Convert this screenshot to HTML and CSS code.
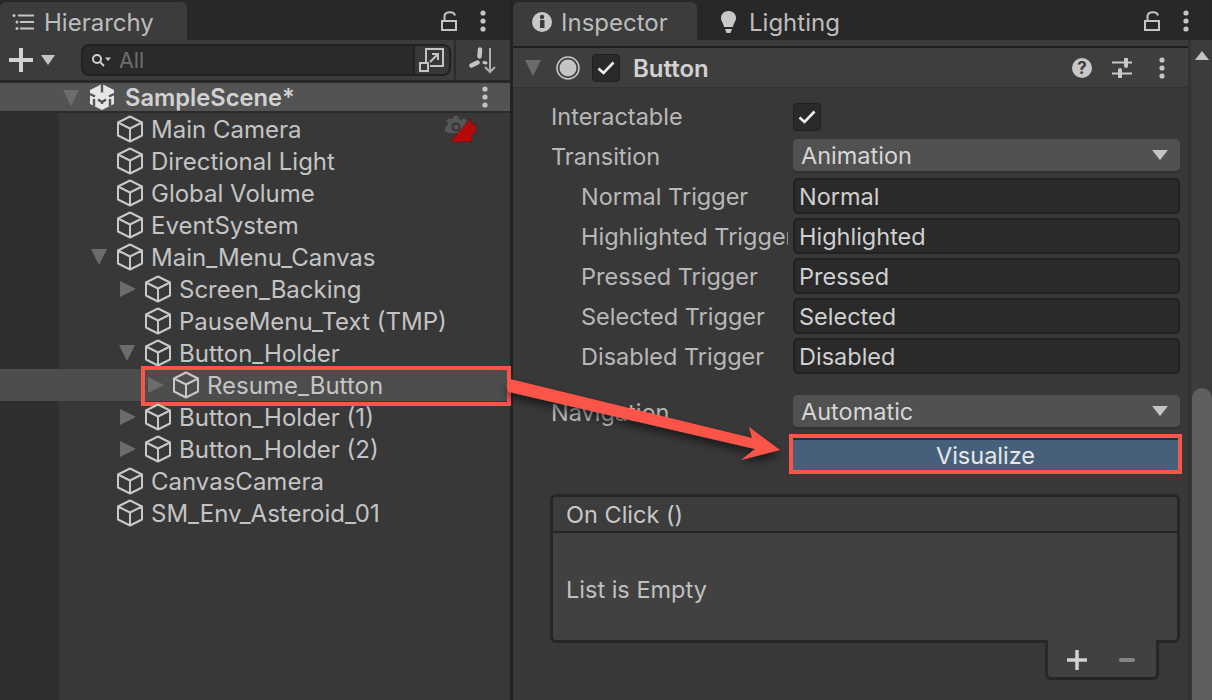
FILE: index.html
```html
<!DOCTYPE html>
<html lang="en">
<head>
<meta charset="utf-8">
<title>Unity Editor</title>
<link rel="stylesheet" href="styles.css">
</head>
<body>
<svg class="defs" width="0" height="0">
  <defs>
    <symbol id="cube" viewBox="0 0 28 28">
      <path d="M14 1.500 26 7.500V20.500L14 26.500 2 20.500V7.500ZM2 7.500 14 13.500 26 7.500M14 13.500V26.500" fill="none" stroke="#c8c8c8" stroke-width="2" stroke-linejoin="round"/>
    </symbol>
    <symbol id="kebab" viewBox="0 0 8 24">
      <circle cx="4" cy="4" r="2.600" fill="#c4c4c4"/><circle cx="4" cy="12" r="2.600" fill="#c4c4c4"/><circle cx="4" cy="20" r="2.600" fill="#c4c4c4"/>
    </symbol>
    <symbol id="lock" viewBox="0 0 16 20">
      <path d="M1 10H15V19H1ZM3.500 10V5.500C3.500 0 13 0 14 4.500" fill="none" stroke="#c4c4c4" stroke-width="2"/>
    </symbol>
    <symbol id="check" viewBox="0 0 18 14">
      <path d="M1.500 7.500 6.500 12 16.500 1.500" fill="none" stroke="#f0f0f0" stroke-width="2.600"/>
    </symbol>
  </defs>
</svg>
<main class="editor">
  <section class="panel hierarchy">
    <header class="tabbar">
      <div class="tab tab-h">
        <svg viewBox="0 0 22 18" width="22" height="18"><path d="M6 2.500H22M8 9H22M8 15.500H22" stroke="#c4c4c4" stroke-width="2"/><circle cx="2" cy="2.500" r="1.500" fill="#c4c4c4"/><circle cx="5" cy="9" r="1.500" fill="#c4c4c4"/><circle cx="5" cy="15.500" r="1.500" fill="#c4c4c4"/></svg>
        <span>Hierarchy</span>
      </div>
      <div class="tab-actions">
        <svg width="16" height="20"><use href="#lock"/></svg>
        <svg width="8" height="24"><use href="#kebab"/></svg>
      </div>
    </header>
    <div class="toolbar">
      <div class="add">
        <svg viewBox="0 0 24 24" width="24" height="24"><path d="M12 0V24M0 12H24" stroke="#d2d2d2" stroke-width="4"/></svg>
        <i class="tri-down lt"></i>
      </div>
      <div class="search">
        <svg class="ic-search" viewBox="0 0 20 14" width="20" height="14"><circle cx="6" cy="6" r="4" fill="none" stroke="#d0d0d0" stroke-width="2"/><path d="M9 9 13 13" stroke="#d0d0d0" stroke-width="2"/><path d="M14 4.500H20L17 8Z" fill="#d0d0d0"/></svg>
        <span class="all">All</span>
        <div class="expand">
          <svg viewBox="0 0 26 26" width="26" height="26"><path d="M7 15V2H24V19H11" fill="none" stroke="#c4c4c4" stroke-width="2"/><rect x="1" y="16" width="8" height="8" fill="none" stroke="#c4c4c4" stroke-width="2"/><path d="M11 15 19 7M13 7H19V13" fill="none" stroke="#c4c4c4" stroke-width="2"/></svg>
        </div>
      </div>
      <div class="sort">
        <svg viewBox="0 0 28 28" width="28" height="28"><path d="M11 3.500 10.500 10.500" stroke="#c4c4c4" stroke-width="4.500" stroke-linecap="round"/><path d="M2.500 19.500 8.500 16.500" stroke="#c4c4c4" stroke-width="4.500" stroke-linecap="round"/><path d="M15 16.500 17 17" stroke="#c4c4c4" stroke-width="3" stroke-linecap="round"/><path d="M21 2V26M16 21 21 26 26 21" fill="none" stroke="#b0b0b0" stroke-width="2"/></svg>
      </div>
    </div>
    <div class="scene">
      <i class="tri-down dim scene-tri"></i>
      <svg class="scene-ic" viewBox="0 0 24 26" width="24" height="26"><path d="M12 0 24 6V20L12 26 0 20V6Z" fill="#e6e6e6"/><path d="M12 0V8.500M0 10 5 12.500M24 10 19 12.500M4 15V22M20 15V22M8 15.500 12 18 16 15.500M12 18V20" stroke="#535353" stroke-width="2.400" fill="none"/></svg>
      <strong>SampleScene*</strong>
      <svg class="scene-kebab" width="8" height="24"><use href="#kebab"/></svg>
    </div>
    <ul class="tree">
      <li class="row d1"><svg class="cube"><use href="#cube"/></svg><span>Main Camera</span>
        <svg class="cam" viewBox="0 0 32 28" width="32" height="28"><path d="M9 1H13L14 4 17 5 19 3 22 6 20 9 21 12 24 13V17L21 18H3L0 16V12L2 11 3 8 1 6 4 3 6 4 8 3Z" fill="#565656"/><circle cx="11" cy="12" r="3.500" fill="none" stroke="#343434" stroke-width="2"/><path d="M5 27 26 3 27 10 31 8V20L27 18 27 27Z" fill="#b80808" stroke="#2a2a2a" stroke-width=".6"/></svg>
      </li>
      <li class="row d1"><svg class="cube"><use href="#cube"/></svg><span>Directional Light</span></li>
      <li class="row d1"><svg class="cube"><use href="#cube"/></svg><span>Global Volume</span></li>
      <li class="row d1"><svg class="cube"><use href="#cube"/></svg><span>EventSystem</span></li>
      <li class="row d1"><i class="tri-down dim"></i><svg class="cube"><use href="#cube"/></svg><span>Main_Menu_Canvas</span></li>
      <li class="row d2"><i class="tri-right"></i><svg class="cube"><use href="#cube"/></svg><span>Screen_Backing</span></li>
      <li class="row d2"><svg class="cube"><use href="#cube"/></svg><span>PauseMenu_Text (TMP)</span></li>
      <li class="row d2"><i class="tri-down dim"></i><svg class="cube"><use href="#cube"/></svg><span>Button_Holder</span></li>
      <li class="row d3 selected"><i class="tri-right"></i><svg class="cube"><use href="#cube"/></svg><span>Resume_Button</span></li>
      <li class="row d2"><i class="tri-right"></i><svg class="cube"><use href="#cube"/></svg><span>Button_Holder (1)</span></li>
      <li class="row d2"><i class="tri-right"></i><svg class="cube"><use href="#cube"/></svg><span>Button_Holder (2)</span></li>
      <li class="row d1"><svg class="cube"><use href="#cube"/></svg><span>CanvasCamera</span></li>
      <li class="row d1"><svg class="cube"><use href="#cube"/></svg><span>SM_Env_Asteroid_01</span></li>
    </ul>
  </section>

  <section class="panel inspector">
    <header class="tabbar">
      <div class="tab tab-i">
        <svg viewBox="0 0 22 22" width="22" height="22"><circle cx="11" cy="11" r="10" fill="#c8c8c8"/><rect x="9" y="9" width="4.500" height="8" fill="#3c3c3c"/><circle cx="11" cy="6" r="2.200" fill="#3c3c3c"/></svg>
        <span>Inspector</span>
      </div>
      <div class="tab tab-l">
        <svg viewBox="0 0 16 24" width="17" height="24"><path d="M8 1C3.500 1 .5 4 .5 8c0 3.500 2.500 5 3 9h9c.5-4 3-5.500 3-9 0-4-3-7-7.500-7Z" fill="#c8c8c8"/><path d="M4.500 19H11.500L10 23H6Z" fill="#c8c8c8"/></svg>
        <span>Lighting</span>
      </div>
      <div class="tab-actions right">
        <svg width="16" height="20"><use href="#lock"/></svg>
        <svg width="8" height="24"><use href="#kebab"/></svg>
      </div>
    </header>
    <div class="insp-wrap">
      <div class="insp-main">
        <div class="comp-head">
          <i class="tri-down dim"></i>
          <svg class="comp-ic" viewBox="0 0 24 24" width="24" height="24"><circle cx="12" cy="12" r="11" fill="none" stroke="#c4c4c4" stroke-width="1.600"/><circle cx="12" cy="12" r="8.500" fill="#c4c4c4"/></svg>
          <div class="checkbox"><svg width="18" height="14"><use href="#check"/></svg></div>
          <strong>Button</strong>
          <div class="comp-actions">
            <svg class="act-help" viewBox="0 0 20 20" width="20" height="20"><circle cx="10" cy="10" r="10" fill="#c8c8c8"/><text x="10" y="16" class="q">?</text></svg>
            <svg class="act-sliders" viewBox="0 0 20 20" width="20" height="20"><path d="M0 4.500H20M0 15.500H20" stroke="#c8c8c8" stroke-width="2" fill="none"/><path d="M14 1V8M8 12V19" stroke="#c8c8c8" stroke-width="4" stroke-linecap="round"/></svg>
            <svg width="8" height="24"><use href="#kebab"/></svg>
          </div>
        </div>
        <div class="props">
          <div class="prop p-check"><label>Interactable</label><div class="checkbox"><svg width="18" height="14"><use href="#check"/></svg></div></div>
          <div class="prop p-drop"><label>Transition</label><div class="drop"><span>Animation</span><i class="tri-down lt small"></i></div></div>
          <div class="prop sub"><label>Normal Trigger</label><div class="field">Normal</div></div>
          <div class="prop sub"><label>Highlighted Trigger</label><div class="field">Highlighted</div></div>
          <div class="prop sub"><label>Pressed Trigger</label><div class="field">Pressed</div></div>
          <div class="prop sub"><label>Selected Trigger</label><div class="field">Selected</div></div>
          <div class="prop sub"><label>Disabled Trigger</label><div class="field">Disabled</div></div>
          <div class="prop p-nav"><label>Navigation</label><div class="drop"><span>Automatic</span><i class="tri-down lt small"></i></div></div>
          <div class="prop p-vis"><span></span><button class="visual">Visualize</button></div>
          <div class="event">
            <div class="event-head">On Click ()</div>
            <div class="event-body">List is Empty</div>
          </div>
          <div class="event-foot">
            <div class="footer-tab">
              <svg viewBox="0 0 20 20" width="20" height="20"><path d="M10 0V20M0 10H20" stroke="#d2d2d2" stroke-width="3.500"/></svg>
              <svg viewBox="0 0 16 4" width="16" height="4"><rect width="16" height="4" rx="2" fill="#858585"/></svg>
            </div>
          </div>
        </div>
      </div>
      <div class="scrollbar">
        <i class="tri-up"></i>
        <div class="thumb"></div>
      </div>
    </div>
  </section>

  <svg class="annot" viewBox="0 0 1212 700" width="1212" height="700">
    <defs><filter id="sh" x="-10%" y="-30%" width="120%" height="170%"><feDropShadow dx="0" dy="5" stdDeviation="4" flood-color="#000" flood-opacity=".55"/></filter></defs>
    <path d="M510 379 752 438 749 427 780 450 741 460 755 449 509 392C506 388 506 381 510 379Z" fill="#fb5549" filter="url(#sh)"/>
  </svg>
</main>
</body>
</html>
```
FILE: styles.css
```css
* { box-sizing: border-box; margin: 0; padding: 0; }
html, body { width: 1212px; height: 700px; overflow: hidden; }
body { background: #232323; font-family: Inter, "Liberation Sans", sans-serif; color: #c8c8c8; font-size: 24px; }
.defs { display: block; height: 0; }
.editor { position: relative; display: flex; width: 1212px; height: 700px; gap: 3px; background: #232323; }
.panel { display: flex; flex-direction: column; height: 700px; }
.hierarchy { width: 510px; background: #383838; }
.inspector { flex: 1; background: #383838; min-width: 0; }

.tabbar { display: flex; height: 40px; background: #282828; padding-top: 2px; align-items: stretch; }
.tab { display: flex; align-items: center; height: 38px; font-size: 24px; color: #bdbdbd; padding-top: 2px; }
.tab-h { width: 187px; background: #3c3c3c; border-radius: 6px 6px 0 0; padding-left: 12px; gap: 10px; }
.tab-i { width: 184px; background: #3c3c3c; border-radius: 6px 6px 0 0; padding-left: 18px; gap: 8px; }
.tab-l { padding-left: 23px; gap: 12px; }
.tab-actions { margin-left: auto; display: flex; align-items: center; gap: 22px; padding-right: 23px; }
.tab-actions.right { gap: 22px; padding-right: 22px; }

.toolbar { display: flex; height: 43px; background: #3c3c3c; align-items: center; border-bottom: 3px solid #282828; }
.add { width: 81px; display: flex; align-items: center; padding-left: 9px; gap: 8px; flex: none; }
.tri-down { display: inline-block; width: 0; height: 0; border-left: 7px solid transparent; border-right: 7px solid transparent; border-top: 10px solid #c8c8c8; flex: none; }
.tri-down.dim { border-left-width: 8.5px; border-right-width: 8.5px; border-top: 16px solid #6c6c6c; }
.tri-down.lt { border-top-color: #c4c4c4; }
.tri-down.small { border-left-width: 8px; border-right-width: 8px; border-top-width: 10px; }
.tri-right { display: inline-block; width: 0; height: 0; border-top: 8px solid transparent; border-bottom: 8px solid transparent; border-left: 16px solid #6c6c6c; flex: none; }
.tri-up { display: block; width: 0; height: 0; border-left: 7px solid transparent; border-right: 7px solid transparent; border-bottom: 9px solid #c4c4c4; margin: 11px 0 0 4px; }
.search { width: 370px; height: 32px; margin-top: -1px; display: flex; align-items: center; background: #2a2a2a; border: 2px solid #222; border-radius: 8px; padding-left: 8px; overflow: hidden; flex: none; }
.ic-search { flex: none; }
.all { margin-left: 8px; color: #6f6f6f; font-size: 21.5px; }
.expand { margin-left: auto; width: 36px; height: 32px; background: #383838; display: flex; align-items: center; justify-content: center; border-left: 2px solid #222; flex: none; }
.sort { flex: 1; height: 40px; margin-left: 3px; display: flex; align-items: center; justify-content: center; border-left: 2px solid #2c2c2c; }

.scene { position: relative; display: flex; align-items: center; height: 30px; background: #535353; border-bottom: 2px solid #2b2b2b; }
.scene-tri { margin-left: 63px; margin-top: 2px; }
.scene-ic { margin-left: 11px; }
.scene strong { margin-left: 11px; font-size: 23.7px; font-weight: 600; color: #d2d2d2; }
.scene-kebab { margin-left: auto; margin-right: 21px; }

.tree { list-style: none; flex: 1; background: linear-gradient(90deg, #2f2f2f 59px, #383838 59px); }
.row { position: relative; display: flex; align-items: center; height: 32px; color: #c4c4c4; white-space: nowrap; font-size: 24px; }
.row > span { margin-left: 7px; }
.row .cube { width: 28px; height: 28px; flex: none; }
.d1 { padding-left: 116px; }
.d1 .tri-down { margin-left: -25px; margin-right: 9px; }
.d2 { padding-left: 144px; }
.d2 .tri-down { margin-left: -25px; margin-right: 9px; }
.d2 .tri-right { margin-left: -24px; margin-right: 8px; }
.d3 { padding-left: 172px; }
.d3 .tri-right { margin-left: -24px; margin-right: 8px; }
.selected { background: #4d4d4d; }
.selected::after { content: ""; position: absolute; left: 141px; top: -3px; width: 370px; height: 40px; border: 4px solid #fb5549; box-sizing: border-box; }
.cam { position: absolute; left: 445px; top: 2px; }

.insp-wrap { flex: 1; display: flex; min-height: 0; }
.insp-main { flex: 1; min-width: 0; padding-top: 6px; background: linear-gradient(#3c3c3c 6px, #383838 6px); }
.comp-head { display: flex; align-items: center; height: 42px; background: #3e3e3e; border-top: 2px solid #1f1f1f; border-bottom: 1px solid #333; padding: 1px 0 0 12px; }
.comp-ic { margin-left: 15px; }
.comp-head .checkbox { margin-left: 12px; }
.comp-head strong { margin-left: 13px; font-size: 24px; font-weight: 600; color: #d2d2d2; }
.comp-actions { margin-left: auto; display: flex; align-items: center; padding-right: 22px; }
.act-help { margin-right: 20px; }
.act-sliders { margin-right: 26px; }
.checkbox { width: 28px; height: 28px; background: #2a2a2a; border: 1px solid #1f1f1f; border-radius: 4px; display: flex; align-items: center; justify-content: center; flex: none; }
.q { font: 700 17px Inter, sans-serif; fill: #3c3c3c; text-anchor: middle; }

.props { padding: 15px 8px 0 38px; }
.prop { display: grid; grid-template-columns: 242px 387px; align-items: center; color: #b8b8b8; font-size: 23.5px; white-space: nowrap; }
.prop label { overflow: hidden; width: 237px; }
.p-check { height: 28px; }
.p-check label { margin-top: -2px; }
.p-drop { height: 34px; margin-top: 8px; margin-bottom: 5px; }
.sub { height: 36px; margin-bottom: 4px; }
.sub label { padding-left: 30px; }
.p-nav { height: 34px; margin-top: 21px; }
.p-vis { height: 32px; margin-top: 9px; }
.drop { display: flex; align-items: center; justify-content: space-between; height: 34px; background: #515151; border-radius: 5px; border-bottom: 2px solid #2f2f2f; padding: 0 12px 0 8px; color: #d6d6d6; font-size: 23.5px; }
.field { display: flex; align-items: center; height: 36px; background: #2a2a2a; border: 2px solid #212121; border-radius: 5px; padding-left: 4px; color: #d0d0d0; font-size: 23.5px; }
.visual { width: 385px; height: 32px; background: #46607c; border: 0; border-top: 2px solid #22303f; outline: 4px solid #fb5549; color: #e8e8e8; font: 23.5px Inter, sans-serif; }
.event { margin: 24px 0 0 -1px; width: 630px; height: 149px; border: 3px solid #262626; border-radius: 6px; background: #414141; }
.event-head { height: 36px; padding-left: 13px; background: #3c3c3c; border-bottom: 2px solid #262626; display: flex; align-items: center; color: #c8c8c8; font-size: 23.5px; border-radius: 4px 4px 0 0; }
.event-body { padding: 43px 0 0 13px; color: #c0c0c0; font-size: 23.5px; line-height: 28px; }
.event-foot { display: flex; justify-content: flex-end; width: 630px; margin-left: -1px; padding-right: 21px; margin-top: -3px; }
.footer-tab { position: relative; width: 114px; height: 40px; padding-top: 3px; background: #414141; border: 3px solid #262626; border-top: 0; border-radius: 0 0 6px 6px; display: flex; align-items: center; padding-left: 19px; gap: 32px; }

.scrollbar { width: 24px; flex: none; background: #3c3c3c; position: relative; border-left: 3px solid #333; }
.thumb { position: absolute; left: 1px; top: 348px; width: 20px; height: 320px; background: #5f5f5f; border-radius: 10px 10px 0 0; }
.annot { position: absolute; left: 0; top: 0; pointer-events: none; }
```
